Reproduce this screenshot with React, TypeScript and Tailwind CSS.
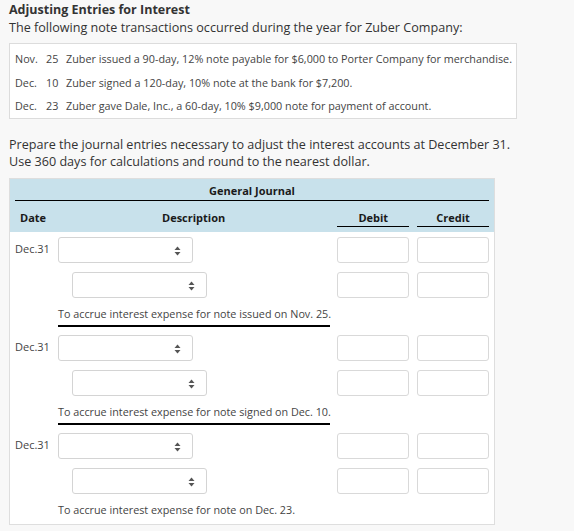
const NOTES = [
  { m: "Nov.", d: "25", text: "Zuber issued a 90-day, 12% note payable for $6,000 to Porter Company for merchandise." },
  { m: "Dec.", d: "10", text: "Zuber signed a 120-day, 10% note at the bank for $7,200." },
  { m: "Dec.", d: "23", text: "Zuber gave Dale, Inc., a 60-day, 10% $9,000 note for payment of account." },
]

const ENTRIES = [
  "To accrue interest expense for note issued on Nov. 25.",
  "To accrue interest expense for note signed on Dec. 10.",
  "To accrue interest expense for note on Dec. 23.",
]

function Select({ indent }: { indent?: boolean }) {
  return (
    <div className={`relative h-[26px] w-[135px] rounded-[3px] border border-[#d4d4d4] bg-white ${indent ? "ml-[14px]" : ""}`}>
      <svg className="absolute right-[11px] top-[8px]" width="7" height="10" viewBox="0 0 7 10">
        <path d="M3.5 0.5 L6.5 4 L0.5 4 Z" fill="#555" />
        <path d="M3.5 9.5 L6.5 6 L0.5 6 Z" fill="#555" />
      </svg>
    </div>
  )
}

function Amount() {
  return <div className="h-[26px] w-[72px] rounded-[3px] border border-[#d9d9d9] bg-white" />
}

export default function App() {
  return (
    <div className="min-h-screen bg-[#f8f8f8] pl-[9px] pt-[1px] font-['Open_Sans',sans-serif] text-[#333]">
      <div className="text-[12.5px] font-bold leading-[18px]">Adjusting Entries for Interest</div>
      <div className="text-[12.6px] leading-[18px]">The following note transactions occurred during the year for Zuber Company:</div>

      {/* notes */}
      <div className="mt-[6px] w-[508px] border border-[#dcdcdc] bg-white pb-[0px] pl-[5px] pt-[3px] text-[10.8px] leading-[23.5px] text-[#444]">
        {NOTES.map((n, i) => (
          <div key={i} className="flex whitespace-nowrap">
            <span className="w-[31px]">{n.m}</span>
            <span className="w-[20px]">{n.d}</span>
            <span>{n.text}</span>
          </div>
        ))}
      </div>

      <p className="mt-[17px] text-[12.6px] leading-[17px]">
        Prepare the journal entries necessary to adjust the interest accounts at December 31.<br />
        Use 360 days for calculations and round to the nearest dollar.
      </p>

      {/* journal */}
      <div className="mt-[8px] w-[486px] border border-[#dedede] bg-white">
        <div className="bg-[#c8e1eb] px-[5px] pb-[5px] text-[11px] font-bold text-[#1a1a1a]">
          <div className="border-b border-black pt-[3px] text-center leading-[18px]">General Journal</div>
          <div className="flex pt-[9px] leading-[16px]">
            <div className="w-[43px] pl-[5px]">Date</div>
            <div className="w-[272px] text-center">Description</div>
            <div className="ml-[8px] w-[72px] border-b border-black text-center">Debit</div>
            <div className="ml-[8px] w-[72px] border-b border-black text-center">Credit</div>
          </div>
        </div>

        <div className="px-[5px] pb-[6px] pt-[5px] text-[11px] text-[#444]">
          {ENTRIES.map((note, i) => (
            <div key={i} className={i > 0 ? "mt-[8px]" : ""}>
              <div className="flex items-center">
                <div className="w-[43px]">Dec.31</div>
                <div className="w-[272px]"><Select /></div>
                <div className="ml-[8px]"><Amount /></div>
                <div className="ml-[8px]"><Amount /></div>
              </div>
              <div className="mt-[9px] flex items-center">
                <div className="w-[43px]" />
                <div className="w-[272px]"><Select indent /></div>
                <div className="ml-[8px]"><Amount /></div>
                <div className="ml-[8px]"><Amount /></div>
              </div>
              <div className="ml-[43px] w-[272px]">
                <div className={`mt-[8px] whitespace-nowrap text-[10.8px] leading-[16px] ${i < ENTRIES.length - 1 ? "border-b-2 border-black pb-[3px]" : ""}`}>{note}</div>
              </div>
            </div>
          ))}
        </div>
      </div>
    </div>
  )
}
